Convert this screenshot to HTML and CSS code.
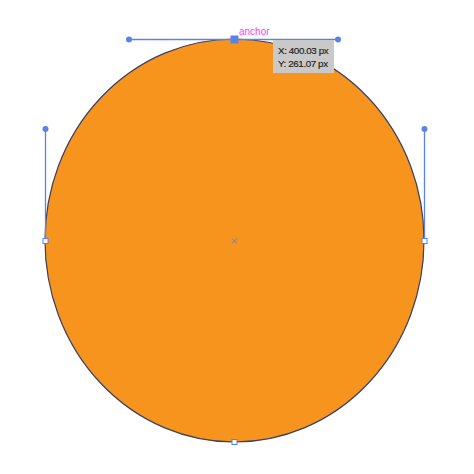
FILE: index.html
```
<!DOCTYPE html>
<html>
<head>
<meta charset="utf-8">
<link rel="stylesheet" href="styles.css">
</head>
<body>
<div class="canvas">
  <svg class="art" width="474" height="474" viewBox="0 0 474 474">
    <ellipse cx="234.5" cy="240.5" rx="189.5" ry="201.5" fill="#f7941e" stroke="#3c4060" stroke-width="1.2"/>
    <g stroke="#5b82e6" stroke-width="1.3" fill="none">
      <line x1="129" y1="39.5" x2="338" y2="39.5"/>
      <line x1="45.5" y1="129" x2="45.5" y2="241"/>
      <line x1="424.5" y1="129" x2="424.5" y2="241"/>
    </g>
    <g fill="#5b82e6">
      <circle cx="129" cy="39.5" r="3"/>
      <circle cx="338" cy="39.5" r="3"/>
      <circle cx="45.5" cy="129" r="3"/>
      <circle cx="424.5" cy="129" r="3"/>
      <rect x="230.5" y="35.5" width="8" height="8"/>
    </g>
    <g fill="#ffffff" stroke="#5b82e6" stroke-width="1">
      <rect x="43" y="238.5" width="5" height="5"/>
      <rect x="422" y="238.5" width="5" height="5"/>
      <rect x="232" y="439.5" width="5" height="5"/>
    </g>
    <g stroke="#6a7fe0" stroke-width="1">
      <line x1="232" y1="238.5" x2="237" y2="243.5"/>
      <line x1="237" y1="238.5" x2="232" y2="243.5"/>
    </g>
  </svg>
  <div class="label">anchor</div>
  <div class="tip">
    <div>X: 400.03 px</div>
    <div>Y: 261.07 px</div>
  </div>
</div>
</body>
</html>
```
FILE: styles.css
```
html, body {
  margin: 0;
  padding: 0;
  background: #ffffff;
}
.canvas {
  position: relative;
  width: 474px;
  height: 474px;
  overflow: hidden;
  font-family: "Liberation Sans", "DejaVu Sans", sans-serif;
}
.art {
  position: absolute;
  left: 0;
  top: 0;
}
.label {
  position: absolute;
  left: 239px;
  top: 26px;
  font-size: 10px;
  line-height: 12px;
  color: #ff3cf0;
}
.tip {
  position: absolute;
  left: 273px;
  top: 40px;
  width: 61px;
  height: 33px;
  box-sizing: border-box;
  padding: 4px 0 0 5px;
  background: #c9c9c9;
  color: #202020;
  font-size: 9.8px;
  line-height: 13px;
  letter-spacing: -0.4px;
  -webkit-text-stroke: 0.15px #202020;
}
```
